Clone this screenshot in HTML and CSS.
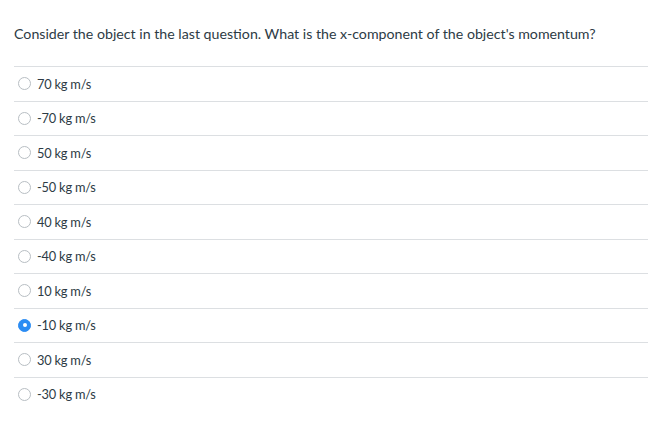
FILE: index.html
```html
<!DOCTYPE html>
<html>
<head>
<meta charset="utf-8">
<link rel="stylesheet" href="styles.css">
</head>
<body>
<div class="quiz">
  <div class="question">Consider the object in the last question. What is the x-component of the object's momentum?</div>
  <div class="answers">
    <label class="answer"><span class="radio"></span><span class="text">70 kg m/s</span></label>
    <label class="answer"><span class="radio"></span><span class="text">-70 kg m/s</span></label>
    <label class="answer"><span class="radio"></span><span class="text">50 kg m/s</span></label>
    <label class="answer"><span class="radio"></span><span class="text">-50 kg m/s</span></label>
    <label class="answer"><span class="radio"></span><span class="text">40 kg m/s</span></label>
    <label class="answer"><span class="radio"></span><span class="text">-40 kg m/s</span></label>
    <label class="answer"><span class="radio"></span><span class="text">10 kg m/s</span></label>
    <label class="answer"><span class="radio checked"></span><span class="text">-10 kg m/s</span></label>
    <label class="answer"><span class="radio"></span><span class="text">30 kg m/s</span></label>
    <label class="answer"><span class="radio"></span><span class="text">-30 kg m/s</span></label>
  </div>
</div>
</body>
</html>
```

FILE: styles.css
```css
html, body {
  margin: 0;
  padding: 0;
  background: #ffffff;
}
body {
  font-family: Lato, "Liberation Sans", sans-serif;
  color: #2d3b45;
}
.quiz {
  width: 634px;
  padding: 24px 0 0 14px;
}
.question {
  font-size: 14.2px;
  line-height: 20px;
  height: 20px;
  margin-bottom: 22px;
}
.answers {
  display: flex;
  flex-direction: column;
}
.answer {
  display: flex;
  align-items: center;
  height: 33.5px;
  border-top: 1px solid #dcdfe2;
  padding-left: 4px;
  font-size: 12.8px;
}
.radio {
  box-sizing: border-box;
  width: 13px;
  height: 13px;
  border-radius: 50%;
  border: 1px solid #b8bec3;
  background: #fff;
  margin-right: 6px;
  position: relative;
  flex: none;
}
.radio.checked {
  background: #2b8cf3;
  border-color: #2b8cf3;
}
.radio.checked::after {
  content: "";
  position: absolute;
  left: 3.5px;
  top: 3.5px;
  width: 4px;
  height: 4px;
  border-radius: 50%;
  background: #fff;
}
.text {
  letter-spacing: -0.2px;
}
```
